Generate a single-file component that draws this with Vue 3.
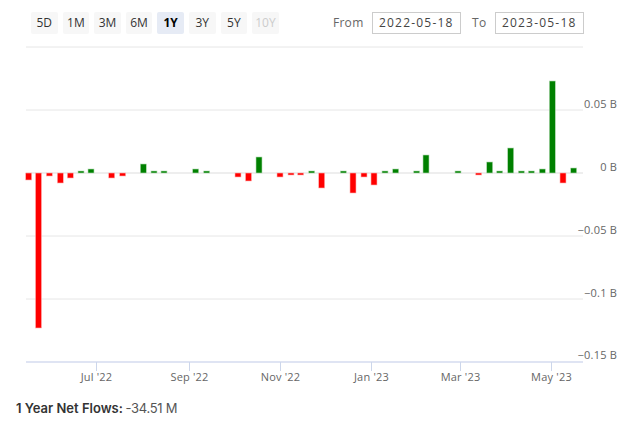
<script setup>
const ranges = [
  { label: '5D' }, { label: '1M' }, { label: '3M' }, { label: '6M' },
  { label: '1Y', active: true }, { label: '3Y' }, { label: '5Y' }, { label: '10Y', disabled: true }
]
const zero = 127
const raw = [
  [28.7,-7],[38.5,-155],[49.3,-3],[60.3,-10],[70.3,-5],[81,2],[91,4],[111.7,-5],[122.7,-3],
  [143.3,9],[154,2],[164,2],[195.7,4],[206.7,2],[238,-4],[248.5,-8],[259,16],[280,-4],[291,-2],
  [300.7,-2],[311.7,2],[321.7,-15],[343.3,2],[353,-20],[364,-4],[374,-12],[385,2],[395.7,4],
  [416.7,2],[426,18],[458,2],[478.7,-2],[489.7,11],[499.7,2],[510.7,25],[521.3,2],[531.3,2],
  [542.3,4],[552.3,92],[563,-10],[573.7,5]
]
const bars = raw.map(([x, v]) => ({
  x: x - 3,
  y: v > 0 ? zero - v : zero,
  h: Math.abs(v),
  fill: v > 0 ? '#008000' : '#ff0000',
  stroke: v > 0 ? '#b3d9b3' : '#ffb3b3'
}))
const grid = [1, 64, 190, 253]
const yLabels = [
  { y: 62, label: '0.05 B' }, { y: 125, label: '0 B' }, { y: 188, label: '−0.05 B' },
  { y: 251, label: '−0.1 B' }, { y: 313, label: '−0.15 B' }
]
const ticks = [
  { x: 96.5, label: "Jul '22" }, { x: 189.5, label: "Sep '22" }, { x: 280.5, label: "Nov '22" },
  { x: 371.5, label: "Jan '23" }, { x: 460.5, label: "Mar '23" }, { x: 551.5, label: "May '23" }
]
</script>

<template>
  <div class="page">
    <div class="toolbar">
      <div class="ranges">
        <span
          v-for="r in ranges"
          :key="r.label"
          class="range"
          :class="{ active: r.active, disabled: r.disabled }"
        >{{ r.label }}</span>
      </div>
      <div class="dates">
        <span class="date-label">From</span>
        <span class="date-box">2022-05-18</span>
        <span class="date-label to">To</span>
        <span class="date-box">2023-05-18</span>
      </div>
    </div>
    <svg class="chart" width="640" height="340" viewBox="0 0 640 340">
      <line v-for="g in grid" :key="g" x1="26" x2="583" :y1="g" :y2="g" stroke="#e6e6e6" />
      <line x1="26" x2="583" :y1="zero" :y2="zero" stroke="#eeeeee" stroke-width="2" />
      <rect
        v-for="(b, i) in bars"
        :key="i"
        :x="b.x"
        :y="b.y"
        width="6"
        :height="b.h"
        :fill="b.fill"
        :stroke="b.stroke"
        stroke-width="0.6"
      />
      <line x1="26" x2="583" y1="316" y2="316" stroke="#dfe4f3" stroke-width="2" />
      <line v-for="t in ticks" :key="t.x" :x1="t.x" :x2="t.x" y1="316" y2="325" stroke="#ccd6eb" />
      <text v-for="t in ticks" :key="t.label" :x="t.x" y="335" text-anchor="middle" class="axis">{{ t.label }}</text>
      <text v-for="l in yLabels" :key="l.label" x="617" :y="l.y" text-anchor="end" class="axis">{{ l.label }}</text>
    </svg>
    <div class="summary"><strong>1 Year Net Flows:</strong> <span class="value">-34.51 M</span></div>
  </div>
</template>

<style scoped>
.page {
  width: 640px;
  height: 429px;
  background: #fff;
  overflow: hidden;
  box-sizing: border-box;
  padding-top: 12px;
}
.toolbar {
  display: flex;
  justify-content: space-between;
  height: 34px;
  padding: 0 56px 0 31px;
}
.ranges {
  display: flex;
  gap: 5px;
  height: 22px;
}
.range {
  width: 26.6px;
  height: 22px;
  border-radius: 2px;
  background: #f7f7f7;
  color: #333;
  font: 12px/22px "Open Sans", sans-serif;
  text-align: center;
}
.range.active {
  background: #e6ebf5;
  color: #000;
  font-weight: 700;
}
.range.disabled {
  color: #ccc;
}
.dates {
  display: flex;
  align-items: flex-start;
  height: 22px;
  font: 12px/18px "Open Sans", sans-serif;
}
.date-label {
  color: #666;
  line-height: 22px;
  margin-right: 8px;
  letter-spacing: 0.3px;
}
.date-label.to {
  margin-left: 11px;
}
.date-box {
  box-sizing: border-box;
  width: 89.5px;
  height: 22px;
  border: 1.5px solid #ccc;
  line-height: 19px;
  color: #444;
  text-align: center;
  letter-spacing: 1.2px;
}
.chart {
  display: block;
}
.axis {
  font: 11px "Open Sans", sans-serif;
  letter-spacing: 0.2px;
  fill: #666;
}
.summary {
  padding-left: 16px;
  margin-top: 13px;
  font: 13px/18px Inter, sans-serif;
  color: #555;
}
.summary strong {
  font-weight: 600;
  color: #333;
}
.value {
  letter-spacing: -0.3px;
  margin-left: -1px;
}
</style>

<style>
body {
  background: #fff;
}
</style>
